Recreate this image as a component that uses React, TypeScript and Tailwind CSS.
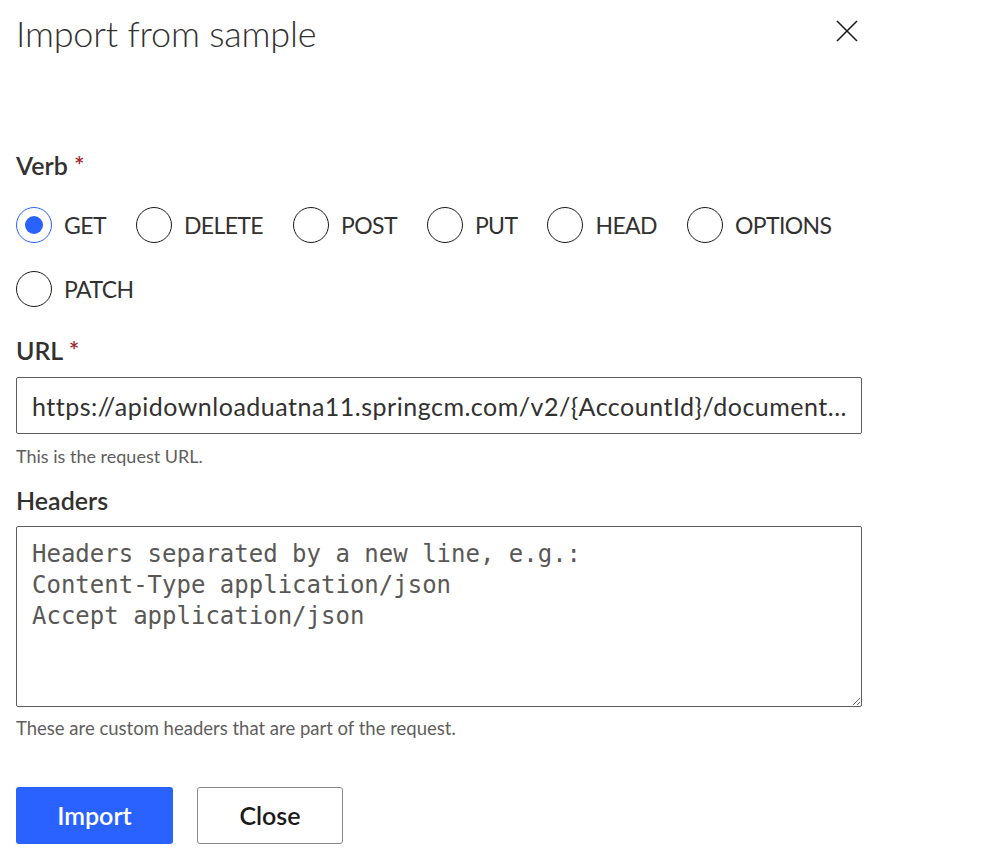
import React from "react";

const verbs = ["GET", "DELETE", "POST", "PUT", "HEAD", "OPTIONS", "PATCH"];

function Radio({ label, checked }: { label: string; checked?: boolean }) {
  return (
    <div className="flex items-center h-[36px]">
      <div
        className={
          checked
            ? "w-[36px] h-[36px] rounded-full border-[1.5px] border-[#2962ff] flex items-center justify-center"
            : "w-[36px] h-[36px] rounded-full border-[1.5px] border-[#1b1a19] flex items-center justify-center"
        }
      >
        {checked && <div className="w-[18px] h-[18px] rounded-full bg-[#2962ff]" />}
      </div>
      <span className="ml-[12px] text-[23px] leading-[36px] tracking-[-0.6px]">{label}</span>
    </div>
  );
}

export default function App() {
  return (
    <div className="w-[1000px] h-[863px] bg-white overflow-hidden text-[#323130] font-['Lato','Noto_Sans',sans-serif]">
      <div className="pl-[16px] pt-[9px] w-[862px]">
        <div className="flex items-start justify-between w-[846px]">
          <h1 className="text-[36px] leading-[48px] font-light tracking-[-0.2px]">Import from sample</h1>
          <svg
            width="22"
            height="22"
            viewBox="0 0 22 22"
            className="mt-[11px] mr-[4px]"
            fill="none"
            stroke="#1b1a19"
            strokeWidth="1.6"
          >
            <line x1="1" y1="1" x2="21" y2="21" />
            <line x1="21" y1="1" x2="1" y2="21" />
          </svg>
        </div>

        <div className="mt-[90px] text-[25px] leading-[36px] font-semibold">
          Verb <span className="text-[#a4262c]">*</span>
        </div>
        <div className="mt-[24px] flex flex-wrap gap-x-[30px] gap-y-[28px] w-[846px]">
          {verbs.map((v, i) => (
            <Radio key={v} label={v} checked={i === 0} />
          ))}
        </div>

        <div className="mt-[25px] text-[25px] leading-[36px] font-semibold">
          URL <span className="text-[#a4262c]">*</span>
        </div>
        <div className="mt-[9px] w-[846px] h-[57px] border border-[#605e5c] rounded-[2px] flex items-center pl-[15px] pr-[3px]">
          <div className="truncate text-[25px] leading-[36px] tracking-[0.5px]">
            https://apidownloaduatna11.springcm.com/v2/{"{AccountId}"}/document...
          </div>
        </div>
        <div className="mt-[10px] text-[18px] leading-[24px] text-[#605e5c]">This is the request URL.</div>

        <div className="mt-[14px] text-[25px] leading-[36px] font-semibold">Headers</div>
        <textarea
          className="mt-[8px] block w-[846px] h-[181px] border border-[#605e5c] rounded-[2px] px-[15px] pt-[12px] text-[24px] leading-[31px] font-['DejaVu_Sans_Mono',monospace] placeholder:text-[#5a5856] outline-none"
          placeholder={"Headers separated by a new line, e.g.:\nContent-Type application/json\nAccept application/json"}
        />
        <div className="mt-[9px] text-[18.5px] leading-[24px] text-[#605e5c]">
          These are custom headers that are part of the request.
        </div>

        <div className="mt-[47px] flex gap-[24px]">
          <button className="w-[157px] h-[57px] rounded-[3px] bg-[#2962ff] text-white text-[25px] font-semibold">
            Import
          </button>
          <button className="w-[146px] h-[57px] rounded-[3px] border-[1.5px] border-[#8a8886] bg-white text-[#1b1a19] text-[25px] font-semibold">
            Close
          </button>
        </div>
      </div>
    </div>
  );
}
